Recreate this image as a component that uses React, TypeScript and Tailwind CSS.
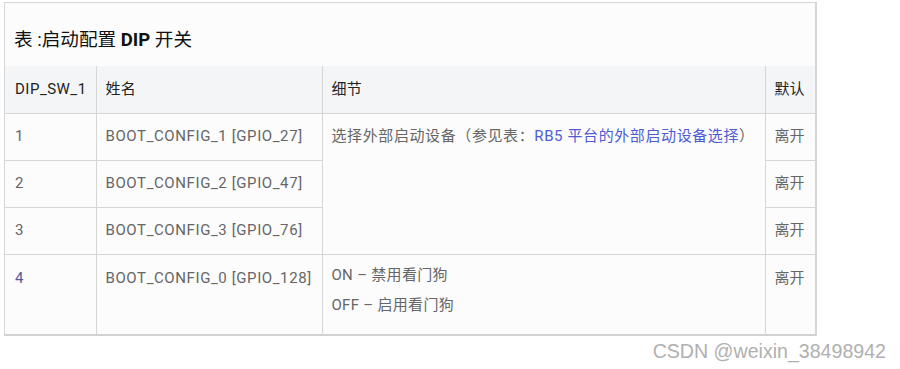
import React from "react";

const latin = "Roboto, 'Noto Sans CJK SC', sans-serif";

export default function App() {
  const bodyRows = [
    { n: "1", name: "BOOT_CONFIG_1 [GPIO_27]" },
    { n: "2", name: "BOOT_CONFIG_2 [GPIO_47]" },
    { n: "3", name: "BOOT_CONFIG_3 [GPIO_76]" },
  ];
  return (
    <div className="w-[900px] h-[369px] bg-white overflow-hidden" style={{ fontFamily: latin }}>
      <div className="ml-[4px] mt-[2px] w-[813px] border border-[#d6d6d6] border-b-2 border-b-[#d2d2d2] border-r-2 bg-[#fcfcfc]">
        <div className="h-[63px] flex items-center pl-[9px] pt-[12px] text-[18.6px] text-[#111]">
          <span>表 :启动配置 <b className="font-bold">DIP</b> 开关</span>
        </div>
        <table className="table-fixed border-collapse w-[810px] text-[15px] leading-[22px] tracking-[0.3px]">
          <colgroup>
            <col className="w-[91px]" />
            <col className="w-[226px]" />
            <col className="w-[443px]" />
            <col className="w-[50px]" />
          </colgroup>
          <thead>
            <tr className="bg-[#f4f5f7] text-[#222]">
              <th className="font-normal text-left align-top pl-[10px] pt-[12px] pb-[13px] tracking-[0.5px]">DIP_SW_1</th>
              <th className="font-normal text-left align-top pl-[9px] pt-[12px] pb-[13px] border-l border-[#d6d6d6]">姓名</th>
              <th className="font-normal text-left align-top pl-[9px] pt-[12px] pb-[13px] border-l border-[#d6d6d6]">细节</th>
              <th className="font-normal text-left align-top pl-[9px] pt-[12px] pb-[13px] border-l border-[#d6d6d6] tracking-normal">默认</th>
            </tr>
          </thead>
          <tbody className="text-[#666]">
            {bodyRows.map((r, i) => (
              <tr key={r.n}>
                <td className="align-top pl-[10px] pt-[11px] pb-[13px] border-t border-[#d6d6d6]">{r.n}</td>
                <td className="align-top pl-[9px] pt-[11px] pb-[13px] border-t border-l border-[#d6d6d6] tracking-[0.6px]">{r.name}</td>
                {i === 0 && (
                  <td rowSpan={3} className="align-top pl-[9px] pt-[11px] border-t border-l border-[#d6d6d6] whitespace-nowrap tracking-[0.6px]">
                    选择外部启动设备（参见表：<span className="text-[#4f5bd5]">RB5 平台的外部启动设备选择</span>）
                  </td>
                )}
                <td className="align-top pl-[9px] pt-[11px] pb-[13px] border-t border-l border-[#d6d6d6] tracking-normal">离开</td>
              </tr>
            ))}
            <tr>
              <td className="align-top pl-[10px] pt-[12px] border-t border-[#d6d6d6] text-[#55589a]">4</td>
              <td className="align-top pl-[9px] pt-[12px] border-t border-l border-[#d6d6d6] tracking-[0.6px]">BOOT_CONFIG_0 [GPIO_128]</td>
              <td className="align-top pl-[9px] pt-[9px] pb-[18px] border-t border-l border-[#d6d6d6]">
                <p className="mb-[8px]">ON – 禁用看门狗</p>
                <p>OFF – 启用看门狗</p>
              </td>
              <td className="align-top pl-[9px] pt-[12px] border-t border-l border-[#d6d6d6] tracking-normal">离开</td>
            </tr>
          </tbody>
        </table>
      </div>
      <div className="flex justify-end pr-[14px] mt-[3px]">
        <span className="text-[19.6px] leading-[24px] text-[#b0b0b0]" style={{ fontFamily: "'Liberation Sans', sans-serif" }}>
          CSDN @weixin_38498942
        </span>
      </div>
    </div>
  );
}
